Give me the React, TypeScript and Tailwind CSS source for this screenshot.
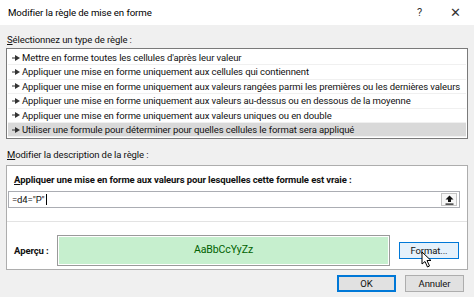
const rules = [
  "Mettre en forme toutes les cellules d'après leur valeur",
  "Appliquer une mise en forme uniquement aux cellules qui contiennent",
  "Appliquer une mise en forme uniquement aux valeurs rangées parmi les premières ou les dernières valeurs",
  "Appliquer une mise en forme uniquement aux valeurs au-dessus ou en dessous de la moyenne",
  "Appliquer une mise en forme uniquement aux valeurs uniques ou en double",
  "Utiliser une formule pour déterminer pour quelles cellules le format sera appliqué",
];

function RuleArrow() {
  return (
    <svg width="8" height="6" viewBox="0 0 8 6" className="shrink-0">
      <rect x="0" y="2.5" width="4" height="1" fill="#333" />
      <path d="M3 0 L8 3 L3 6 Z" fill="#333" />
    </svg>
  );
}

function UploadGlyph() {
  return (
    <svg width="9" height="10" viewBox="0 0 9 10">
      <path d="M4.5 0.5 L8.5 4.5 L6 4.5 L6 7 L3 7 L3 4.5 L0.5 4.5 Z" fill="#111" />
      <rect x="0.5" y="8.5" width="8" height="1.2" fill="#111" />
    </svg>
  );
}

function Cursor() {
  return (
    <svg width="12" height="17" viewBox="0 0 12 17" className="absolute left-[21px] top-[8px]">
      <path
        d="M1 1 L1 13 L4 10.5 L6.5 16 L8.5 15 L6 9.5 L10 9.5 Z"
        fill="#fff"
        stroke="#000"
        strokeWidth="1"
        strokeLinejoin="round"
      />
    </svg>
  );
}

export default function App() {
  return (
    <div className="w-[474px] h-[297px] overflow-hidden bg-[#f0f0f0] text-[9.5px] tracking-[-0.1px] text-[#111] font-['Roboto',sans-serif] leading-none">
      {/* title bar */}
      <div className="h-[25px] bg-white flex items-center pl-[8px]">
        <span className="text-[9.7px] text-black">Modifier la règle de mise en forme</span>
        <span className="ml-auto mr-[28px] text-[11px] text-[#333]">?</span>
        <span className="mr-[13px] text-[13px] font-light text-[#333]">✕</span>
      </div>

      <div className="px-[6px] pt-[9px]">
        <div className="pl-[1px] h-[12px] flex items-center">
          <span>
            <span className="underline underline-offset-1">S</span>électionnez un type de règle :
          </span>
        </div>

        {/* rule list */}
        <div className="mt-[2px] h-[91px] border border-[#7a7a7a] bg-white pt-[2px] px-[1px]">
          {rules.map((r, i) => (
            <div
              key={r}
              className={`h-[14.4px] flex items-center gap-[2px] pl-[4px] border-b border-[#f0f0f0] ${
                i === rules.length - 1 ? "bg-[#d9d9d9]" : ""
              }`}
            >
              <RuleArrow />
              <span className="whitespace-nowrap">{r}</span>
            </div>
          ))}
        </div>

        <div className="mt-[10px] pl-[1px] h-[12px] flex items-center">
          <span>
            <span className="underline underline-offset-1">M</span>odifier la description de la règle :
          </span>
        </div>

        {/* description group */}
        <div className="mt-[4px] h-[105px] border border-[#adadad] bg-white">
          <div className="pl-[7px] pt-[9px] h-[25px] font-bold">
            <span className="underline underline-offset-1">A</span>ppliquer une mise en forme aux valeurs pour lesquelles cette formule est vraie :
          </div>
          <div className="mx-[1px] mr-[7px] h-[17px] border border-[#abadb3] flex items-center pl-[3px]">
            <span>=d4=&quot;P&quot;</span>
            <span className="ml-[1px] w-px h-[11px] bg-black" />
            <div className="ml-auto mr-[2px] w-[16px] h-[13px] border border-[#c4c4c4] bg-[#f7f7f7] flex items-center justify-center">
              <UploadGlyph />
            </div>
          </div>
          <div className="mt-[13px] h-px bg-[#e3e3e3]" />
          <div className="flex items-center pl-[7px] pt-[13px]">
            <span className="w-[43px] font-bold">Aperçu :</span>
            <div className="w-[333px] h-[31px] border border-[#9a9a9a] p-[1px]">
              <div className="w-full h-full bg-[#c6efce] flex items-center justify-center text-[#006100] text-[10.5px]">
                AaBbCcYyZz
              </div>
            </div>
            <div className="relative ml-[9px] w-[60px] h-[17px] border border-[#0078d7] bg-[#e5f1fb] flex items-center justify-center">
              Format...
              <Cursor />
            </div>
          </div>
        </div>

        {/* bottom buttons */}
        <div className="flex justify-end gap-[9px] mt-[5px] pr-[4px]">
          <button className="w-[59px] h-[17px] border-2 border-[#0078d7] bg-[#e1e1e1] flex items-center justify-center">
            OK
          </button>
          <button className="w-[59px] h-[17px] border border-[#adadad] bg-[#e1e1e1] flex items-center justify-center">
            Annuler
          </button>
        </div>
      </div>
    </div>
  );
}
